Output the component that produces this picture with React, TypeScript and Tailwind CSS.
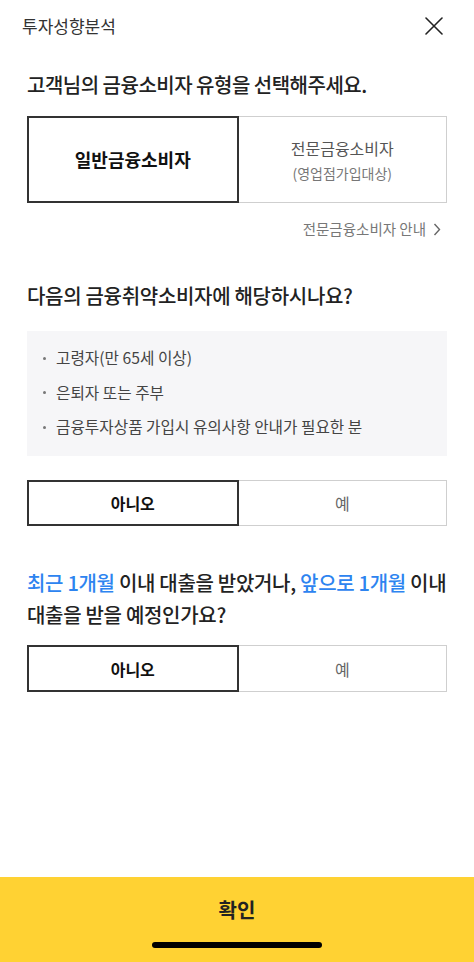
import React, { useState } from 'react';

const font = { fontFamily: '"Noto Sans CJK KR", "Noto Sans", sans-serif' };

interface ToggleProps {
  value: boolean;
  onChange: (v: boolean) => void;
  tall?: boolean;
}

const YesNoToggle: React.FC<ToggleProps> = ({ value, onChange, tall }) => (
  <div className={`flex ${tall ? 'h-[47px]' : 'h-[46px]'}`}>
    <button
      type="button"
      onClick={() => onChange(false)}
      className={`flex-1 flex items-center justify-center text-[16px] ${!value ? 'border-2 border-[#333] text-[#111] font-bold' : 'border border-r-0 border-[#cfcfcf] text-[#666]'}`}
    >
      아니오
    </button>
    <button
      type="button"
      onClick={() => onChange(true)}
      className={`flex-1 flex items-center justify-center text-[16px] ${value ? 'border-2 border-[#333] text-[#111] font-bold' : 'border border-l-0 border-[#cfcfcf] text-[#666]'}`}
    >
      예
    </button>
  </div>
);

const App: React.FC = () => {
  const [pro, setPro] = useState(false);
  const [vulnerable, setVulnerable] = useState(false);
  const [loan, setLoan] = useState(false);

  return (
    <div style={font} className="w-[474px] h-[962px] bg-white flex flex-col text-[#222] overflow-hidden">
      {/* header */}
      <div className="h-[52px] flex items-center justify-between pl-[22px] pr-[31px]">
        <span className="text-[17px] text-[#333]">투자성향분석</span>
        <svg width="18" height="18" viewBox="0 0 18 18" fill="none" stroke="#222" strokeWidth="1.6" strokeLinecap="round">
          <path d="M1 1L17 17M17 1L1 17" />
        </svg>
      </div>

      <div className="px-[27px] flex flex-col">
        <h2 className="mt-[19px] text-[20px] leading-[28px] font-medium tracking-[-0.5px]">고객님의 금융소비자 유형을 선택해주세요.</h2>

        <div className="mt-[17px] flex h-[87px]">
          <button
            type="button"
            onClick={() => setPro(false)}
            className={`flex-1 flex flex-col items-center justify-center ${!pro ? 'border-2 border-[#333]' : 'border border-r-0 border-[#cfcfcf]'}`}
          >
            <span className={`text-[18px] ${!pro ? 'font-bold text-[#111]' : 'text-[#555]'}`}>일반금융소비자</span>
          </button>
          <button
            type="button"
            onClick={() => setPro(true)}
            className={`flex-1 flex flex-col items-center justify-center ${pro ? 'border-2 border-[#333]' : 'border border-l-0 border-[#cfcfcf]'}`}
          >
            <span className={`text-[16px] leading-[24px] ${pro ? 'font-bold text-[#111]' : 'text-[#555]'}`}>전문금융소비자</span>
            <span className="text-[14px] leading-[22px] text-[#777] mt-[2px]">(영업점가입대상)</span>
          </button>
        </div>

        <div className="mt-[16px] flex justify-end items-center gap-[7px] pr-[6px] h-[20px]">
          <span className="text-[14.5px] text-[#777]">전문금융소비자 안내</span>
          <svg width="8" height="13" viewBox="0 0 8 13" fill="none" stroke="#666" strokeWidth="1.4">
            <path d="M1.5 1L6.5 6.5L1.5 12" />
          </svg>
        </div>

        <h2 className="mt-[43px] text-[20px] leading-[28px] font-medium tracking-[-0.3px]">다음의 금융취약소비자에 해당하시나요?</h2>

        <div className="mt-[21px] bg-[#f6f6f8] h-[125px] pt-[16px] pl-[16px] flex flex-col gap-[12.5px]">
          {['고령자(만 65세 이상)', '은퇴자 또는 주부', '금융투자상품 가입시 유의사항 안내가 필요한 분'].map(t => (
            <div key={t} className="flex items-center h-[22px] text-[15.7px] text-[#444]">
              <span className="w-[3px] h-[3px] rounded-full bg-[#777] mr-[10px]" />
              <span>{t}</span>
            </div>
          ))}
        </div>

        <div className="mt-[24px]">
          <YesNoToggle value={vulnerable} onChange={setVulnerable} />
        </div>

        <h2 className="mt-[41px] text-[20px] leading-[32px] font-medium tracking-[-0.3px]">
          <span className="text-[#2d84f0]">최근 1개월</span> 이내 대출을 받았거나, <span className="text-[#2d84f0]">앞으로 1개월</span> 이내
          <br />
          대출을 받을 예정인가요?
        </h2>

        <div className="mt-[14px]">
          <YesNoToggle value={loan} onChange={setLoan} tall />
        </div>
      </div>

      <button type="button" className="mt-auto h-[85px] bg-[#ffd233] flex flex-col items-center">
        <span className="mt-[20px] text-[20px] leading-[26px] font-bold text-[#222]">확인</span>
        <span className="mt-[19px] w-[170px] h-[6px] rounded-full bg-black" />
      </button>
    </div>
  );
};

export default App;
